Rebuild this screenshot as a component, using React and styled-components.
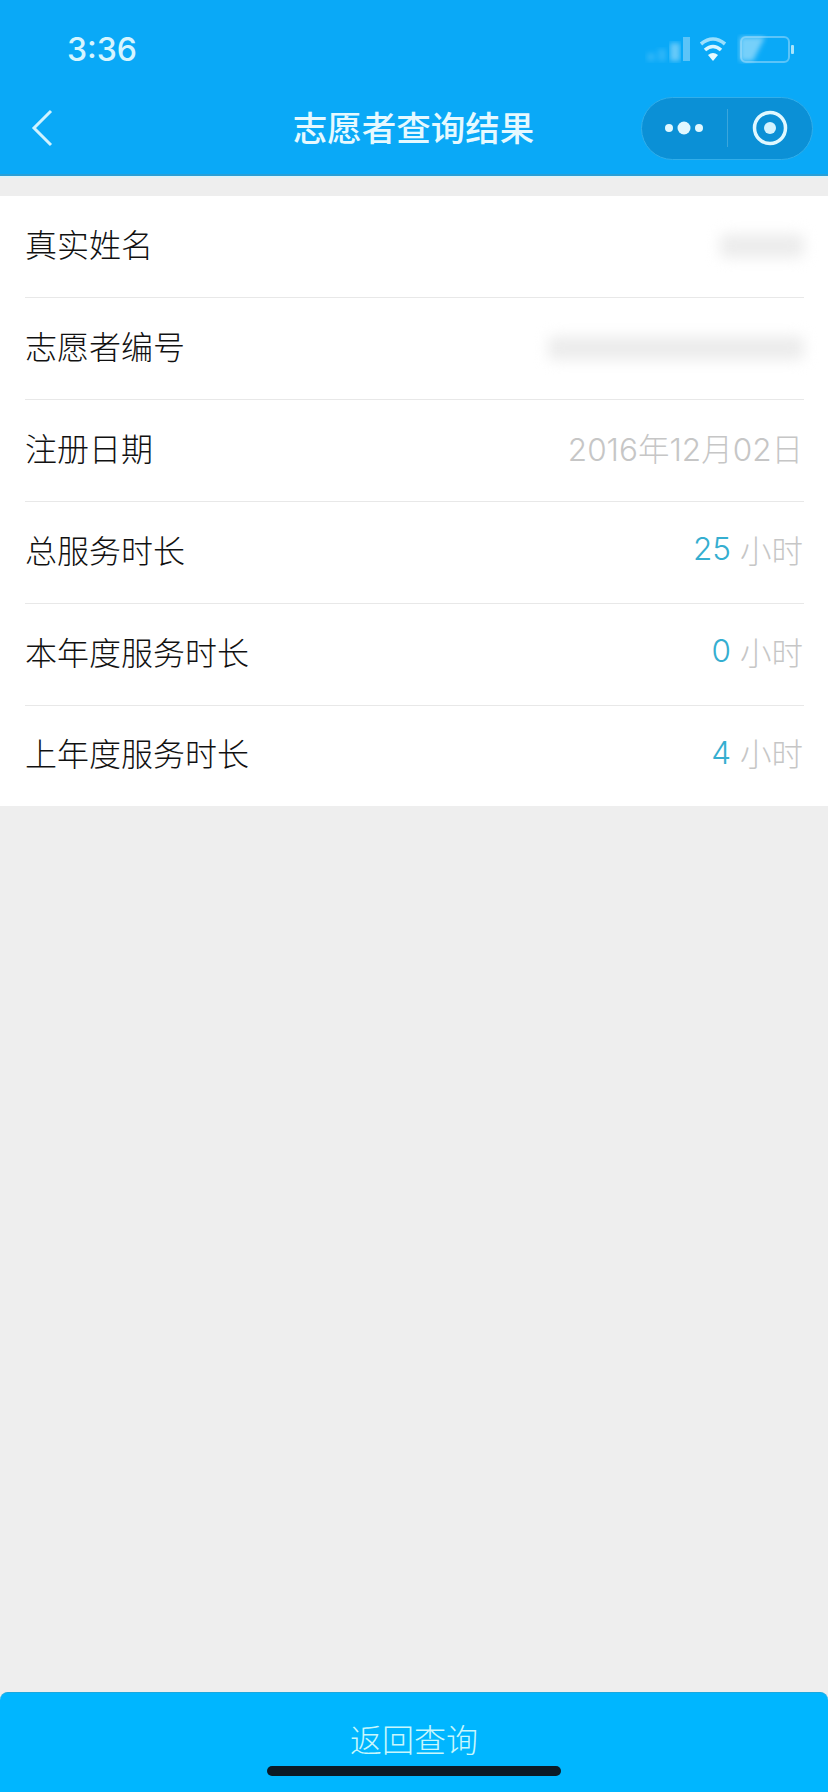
import styled, { createGlobalStyle } from "styled-components";

const GlobalStyle = createGlobalStyle`
  html, body { margin: 0; padding: 0; background: #eeeeee; }
  * { box-sizing: border-box; }
  body { font-family: "Liberation Sans", "Noto Sans CJK SC", sans-serif; }
`;

const Page = styled.div`
  width: 828px;
  height: 1792px;
  display: flex;
  flex-direction: column;
  position: relative;
  overflow: hidden;
  background: #eeeeee;
`;

const Header = styled.header`
  height: 176px;
  background: #0aa9f7;
  border-bottom: 2px solid #2a9fd6;
  box-shadow: 0 2px 0 #e0f3f8;
  color: #e2f8ff;
  display: flex;
  flex-direction: column;
`;

const StatusBar = styled.div`
  height: 94px;
  padding: 4px 33px 0 67px;
  display: flex;
  align-items: center;
  justify-content: space-between;
`;

const Clock = styled.span`
  font-family: "Inter", "Liberation Sans", sans-serif;
  font-size: 32px;
  font-weight: 500;
  color: #d6f5ff;
`;

const StatusIcons = styled.svg`
  width: 152px;
  height: 36px;
  display: block;
`;

const NavBar = styled.div`
  flex: 1;
  padding: 0 15px 0 28px;
  display: grid;
  grid-template-columns: 172px 1fr 172px;
  align-items: center;
  margin-top: -12px;
`;

const BackIcon = styled.svg`
  width: 28px;
  height: 40px;
  display: block;
`;

const Title = styled.h1`
  margin: 0 0 4px;
  text-align: center;
  font-family: "Noto Sans CJK SC", sans-serif;
  font-size: 34.5px;
  font-weight: 500;
  color: #e6f9ff;
  transform: translateX(-7px);
`;

const Capsule = styled.div`
  height: 63px;
  border-radius: 32px;
  background: #0b90d6;
  border: 1px solid #32aeea;
  display: flex;
  align-items: center;
`;

const CapsuleSide = styled.div`
  flex: 1;
  height: 38px;
  display: flex;
  align-items: center;
  justify-content: center;
  border-left: ${(p) => (p.$divided ? "1px solid #3ba6dc" : "none")};
`;

const CapsuleIcon = styled.svg`
  display: block;
`;

const List = styled.section`
  margin-top: 20px;
  background: #ffffff;
`;

const Row = styled.div`
  height: ${(p) => (p.$last ? "100px" : "102px")};
  margin: 0 24px 0 25px;
  padding-bottom: 8px;
  display: flex;
  align-items: center;
  justify-content: space-between;
  border-bottom: ${(p) => (p.$last ? "none" : "1px solid #e8e8e8")};
`;

const Label = styled.span`
  font-family: "Noto Sans CJK SC", sans-serif;
  font-size: 32px;
  font-weight: 300;
  color: #111111;
`;

const Value = styled.span`
  font-family: "Inter", "Noto Sans CJK SC", sans-serif;
  font-size: 31.5px;
  font-weight: 300;
  color: #c6c6c6;
  display: flex;
  align-items: center;
  gap: 9px;
  padding-right: 1px;
`;

const Hours = styled.span`
  color: #35aed0;
  font-weight: 300;
`;

const BlurredValue = styled.div`
  width: ${(p) => p.$width}px;
  height: 24px;
  margin-top: 6px;
  background: #ececec;
  border-radius: 6px;
  filter: blur(7px);
`;

const Spacer = styled.div`
  flex: 1;
`;

const ReturnButton = styled.button`
  height: 100px;
  width: 100%;
  border: 0;
  border-top: 1px solid #18a8e0;
  border-radius: 8px 8px 0 0;
  background: #00b6ff;
  color: #c8f7fc;
  font-family: "Noto Sans CJK SC", sans-serif;
  font-size: 32px;
  font-weight: 300;
  padding: 0 0 10px;
  display: block;
`;

const HomeBar = styled.div`
  position: absolute;
  left: 267px;
  bottom: 16px;
  width: 294px;
  height: 10px;
  border-radius: 5px;
  background: #0b1a26;
`;

const rows = [
  { label: "真实姓名", blur: 84 },
  { label: "志愿者编号", blur: 256 },
  { label: "注册日期", text: "2016年12月02日" },
  { label: "总服务时长", hours: 25 },
  { label: "本年度服务时长", hours: 0 },
  { label: "上年度服务时长", hours: 4 },
];

export default function App() {
  return (
    <Page>
      <GlobalStyle />
      <Header>
        <StatusBar>
          <Clock>3:36</Clock>
          <StatusIcons viewBox="0 0 152 36">
            <defs>
              <filter id="soft"><feGaussianBlur stdDeviation="2.4" /></filter>
            </defs>
            <g fill="#cfefff" opacity="0.18" filter="url(#soft)">
              <rect x="4" y="22" width="8" height="8" />
              <rect x="15" y="18" width="8" height="12" />
            </g>
            <rect x="27" y="12" width="10" height="18" fill="#8fd8fa" opacity="0.7" filter="url(#soft)" />
            <rect x="40" y="6" width="7" height="24" fill="#5cc4f8" />
            <g fill="none" stroke="#d8f6ff" strokeWidth="3.6">
              <path d="M58 13 Q70 3 82 13" opacity="0.7" />
              <path d="M62 19 Q70 12 78 19" />
            </g>
            <path d="M65 24 Q70 20 75 24 L70 30 Z" fill="#e6fbff" />
            <rect x="98" y="6" width="48" height="25" rx="5" fill="none" stroke="#5cc4f8" strokeWidth="2" />
            <path d="M97 6 H122 L110 30 H97 Z" fill="#bfeafc" opacity="0.6" filter="url(#soft)" />
            <rect x="148" y="14" width="3" height="9" rx="1" fill="#a8e4fb" />
          </StatusIcons>
        </StatusBar>
        <NavBar>
          <BackIcon viewBox="0 0 28 40">
            <path d="M23 3 L6 20 L23 37" fill="none" stroke="#d0f3ff" strokeWidth="3" />
          </BackIcon>
          <Title>志愿者查询结果</Title>
          <Capsule>
            <CapsuleSide>
              <CapsuleIcon width="40" height="16" viewBox="0 0 40 16">
                <circle cx="5" cy="8" r="4" fill="#e0f8ff" />
                <circle cx="20" cy="8" r="6.5" fill="#e0f8ff" />
                <circle cx="35" cy="8" r="4" fill="#e0f8ff" />
              </CapsuleIcon>
            </CapsuleSide>
            <CapsuleSide $divided>
              <CapsuleIcon width="36" height="36" viewBox="0 0 36 36">
                <circle cx="18" cy="18" r="15.5" fill="none" stroke="#e0f8ff" strokeWidth="3.5" />
                <circle cx="18" cy="18" r="6" fill="#d4f3ff" />
              </CapsuleIcon>
            </CapsuleSide>
          </Capsule>
        </NavBar>
      </Header>
      <List>
        {rows.map((row, i) => (
          <Row key={row.label} $last={i === rows.length - 1}>
            <Label>{row.label}</Label>
            {row.blur && <BlurredValue $width={row.blur} />}
            {row.text && <Value>{row.text}</Value>}
            {row.hours !== undefined && (
              <Value>
                <Hours>{row.hours}</Hours>
                小时
              </Value>
            )}
          </Row>
        ))}
      </List>
      <Spacer />
      <ReturnButton>返回查询</ReturnButton>
      <HomeBar />
    </Page>
  );
}
